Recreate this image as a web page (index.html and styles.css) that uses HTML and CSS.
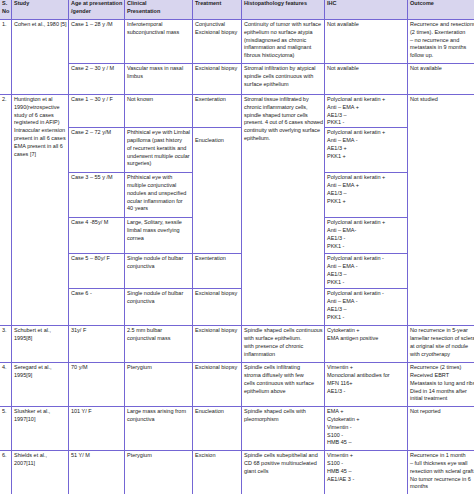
FILE: index.html
```html
<!DOCTYPE html>
<html lang="en">
<head>
<meta charset="utf-8">
<title>Table</title>
<link rel="stylesheet" href="styles.css">
</head>
<body>
<table class="tbl">
  <colgroup>
    <col class="c-no"><col class="c-study"><col class="c-age"><col class="c-clin"><col class="c-tx"><col class="c-histo"><col class="c-ihc"><col class="c-out">
  </colgroup>
  <thead>
    <tr class="r-head">
      <th>S.<br>No</th>
      <th>Study</th>
      <th>Age at presentation /gender</th>
      <th>Clinical<br>Presentation</th>
      <th>Treatment</th>
      <th>Histopathology features</th>
      <th>IHC</th>
      <th>Outcome</th>
    </tr>
  </thead>
  <tbody>
    <tr class="r44">
      <td rowspan="2">1.</td>
      <td rowspan="2">Cohen et al., 1980 [5]</td>
      <td>Case 1 – 28 y /M</td>
      <td>Inferotemporal subconjunctival mass</td>
      <td>Conjunctival Excisional biopsy</td>
      <td>Continuity of tumor with surface epithelium no surface atypia (misdiagnosed as chronic inflammation and malignant fibrous histiocytoma)</td>
      <td>Not available</td>
      <td>Recurrence and resections (2 times). Exenteration<br>– no recurrence and metastasis in 9 months follow up.</td>
    </tr>
    <tr class="r31">
      <td>Case 2 – 30 y / M</td>
      <td>Vascular mass in nasal limbus</td>
      <td>Excisional biopsy</td>
      <td>Stromal infiltration by atypical spindle cells continuous with surface epithelium</td>
      <td>Not available</td>
      <td>Not available</td>
    </tr>
    <tr class="r33">
      <td rowspan="6">2.</td>
      <td rowspan="6">Huntington et al 1990(retrospective study of 6 cases registered in AFIP) Intraocular extension present in all 6 cases EMA present in all 6 cases [7]</td>
      <td>Case 1 – 30 y / F</td>
      <td>Not known</td>
      <td>Exenteration</td>
      <td rowspan="6" class="tight">Stromal tissue infiltrated by chronic inflammatory cells, spindle shaped tumor cells present. 4 out of 6 cases showed continuity with overlying surface epithelium.</td>
      <td>Polyclonal anti keratin +<br>Anti – EMA +<br>AE1/3 –<br>PKK1 -</td>
      <td rowspan="6">Not studied</td>
    </tr>
    <tr class="r45">
      <td>Case 2 – 72 y/M</td>
      <td>Phthisical eye with Limbal papilloma (past history<br>of recurrent keratitis and underwent multiple ocular surgeries)</td>
      <td rowspan="3" class="lowered">Enucleation</td>
      <td>Polyclonal anti keratin +<br>Anti – EMA -<br>AE1/3 +<br>PKK1 +</td>
    </tr>
    <tr class="r45">
      <td>Case 3 – 55 y /M</td>
      <td>Phthisical eye with multiple conjunctival nodules and unspecified ocular inflammation for<br>40 years</td>
      <td>Polyclonal anti keratin +<br>Anti – EMA +<br>AE1/3 –<br>PKK1 +</td>
    </tr>
    <tr class="r36">
      <td>Case 4 -85y/ M</td>
      <td>Large, Solitary, sessile limbal mass overlying cornea</td>
      <td>Polyclonal anti keratin +<br>Anti – EMA-<br>AE1/3 -<br>PKK1 -</td>
    </tr>
    <tr class="r35">
      <td>Case 5 – 80y/ F</td>
      <td>Single nodule of bulbar conjunctiva</td>
      <td>Exenteration</td>
      <td>Polyclonal anti keratin -<br>Anti – EMA -<br>AE1/3 –<br>PKK1 -</td>
    </tr>
    <tr class="r37">
      <td>Case 6 -</td>
      <td>Single nodule of bulbar conjunctiva</td>
      <td>Excisional biopsy</td>
      <td>Polyclonal anti keratin -<br>Anti – EMA -<br>AE1/3 –<br>PKK1 -</td>
    </tr>
    <tr class="r37">
      <td>3.</td>
      <td>Schubert et al., 1995[8]</td>
      <td>31y/ F</td>
      <td>2.5 mm bulbar conjunctival mass</td>
      <td>Excisional biopsy</td>
      <td>Spindle shaped cells continuous with surface epithelium.<br>with presence of chronic inflammation</td>
      <td>Cytokeratin +<br>EMA antigen positive</td>
      <td>No recurrence in 5-year lamellar resection of sclera at original site of nodule with cryotherapy</td>
    </tr>
    <tr class="r44">
      <td>4.</td>
      <td>Seregard et al., 1995[9]</td>
      <td>70 y/M</td>
      <td>Pterygium</td>
      <td>Excisional biopsy</td>
      <td>Spindle cells infiltrating<br>stroma diffusely with few<br>cells continuous with surface<br>epithelium above</td>
      <td>Vimentin +<br>Monoclonal antibodies for<br>MFN 116+<br>AE1/3 -</td>
      <td>Recurrence (2 times)<br>Received EBRT<br>Metastasis to lung and ribs<br>Died in 14 months after initial treatment</td>
    </tr>
    <tr class="r44">
      <td>5.</td>
      <td>Slushker et al., 1997[10]</td>
      <td>101 Y/ F</td>
      <td>Large mass arising from conjunctiva</td>
      <td>Enucleation</td>
      <td>Spindle shaped cells with pleomorphism</td>
      <td>EMA +<br>Cytokeratin +<br>Vimentin -<br>S100 -<br>HMB 45 –</td>
      <td>Not reported</td>
    </tr>
    <tr class="r50">
      <td>6.</td>
      <td>Shields et al., 2007[11]</td>
      <td>51 Y/ M</td>
      <td>Pterygium</td>
      <td>Excision</td>
      <td>Spindle cells subepithelial and CD 68 positive multinucleated giant cells</td>
      <td>Vimentin +<br>S100 -<br>HMB 45 –<br>AE1/AE 3 -</td>
      <td>Recurrence in 1 month<br>– full thickness eye wall resection with scleral graft No tumor recurrence in 6 months</td>
    </tr>
  </tbody>
</table>
</body>
</html>
```
FILE: styles.css
```css
html, body {
  margin: 0;
  padding: 0;
  background: #ffffff;
  overflow: hidden;
}

.tbl {
  border-collapse: collapse;
  table-layout: fixed;
  width: 478px;
  margin: -1px 0 0 -1px;
  font-family: "Liberation Sans", Arial, sans-serif;
  font-size: 5.5px;
  line-height: 7.8px;
  color: #222222;
}

.tbl th,
.tbl td {
  border: 1px solid #7466d4;
  padding: 1px 0 0 2px;
  vertical-align: top;
  text-align: left;
  overflow: hidden;
}

.tbl th {
  background: #d8d5ee;
  font-weight: bold;
  color: #1e1e1e;
  padding-top: 0;
}

.c-no { width: 12px; }
.c-study { width: 57px; }
.c-age { width: 56px; }
.c-clin { width: 68px; }
.c-tx { width: 49px; }
.c-histo { width: 83px; }
.c-ihc { width: 83px; }
.c-out { width: 70px; }

.r-head { height: 20px; }
.r31 { height: 31px; }
.r33 { height: 33px; }
.r35 { height: 35px; }
.r36 { height: 36px; }
.r37 { height: 37px; }
.r44 { height: 44px; }
.r45 { height: 45px; }
.r50 { height: 50px; }

.tbl td.lowered { padding-top: 9px; }
.tbl td.tight { letter-spacing: -0.05px; }
```
